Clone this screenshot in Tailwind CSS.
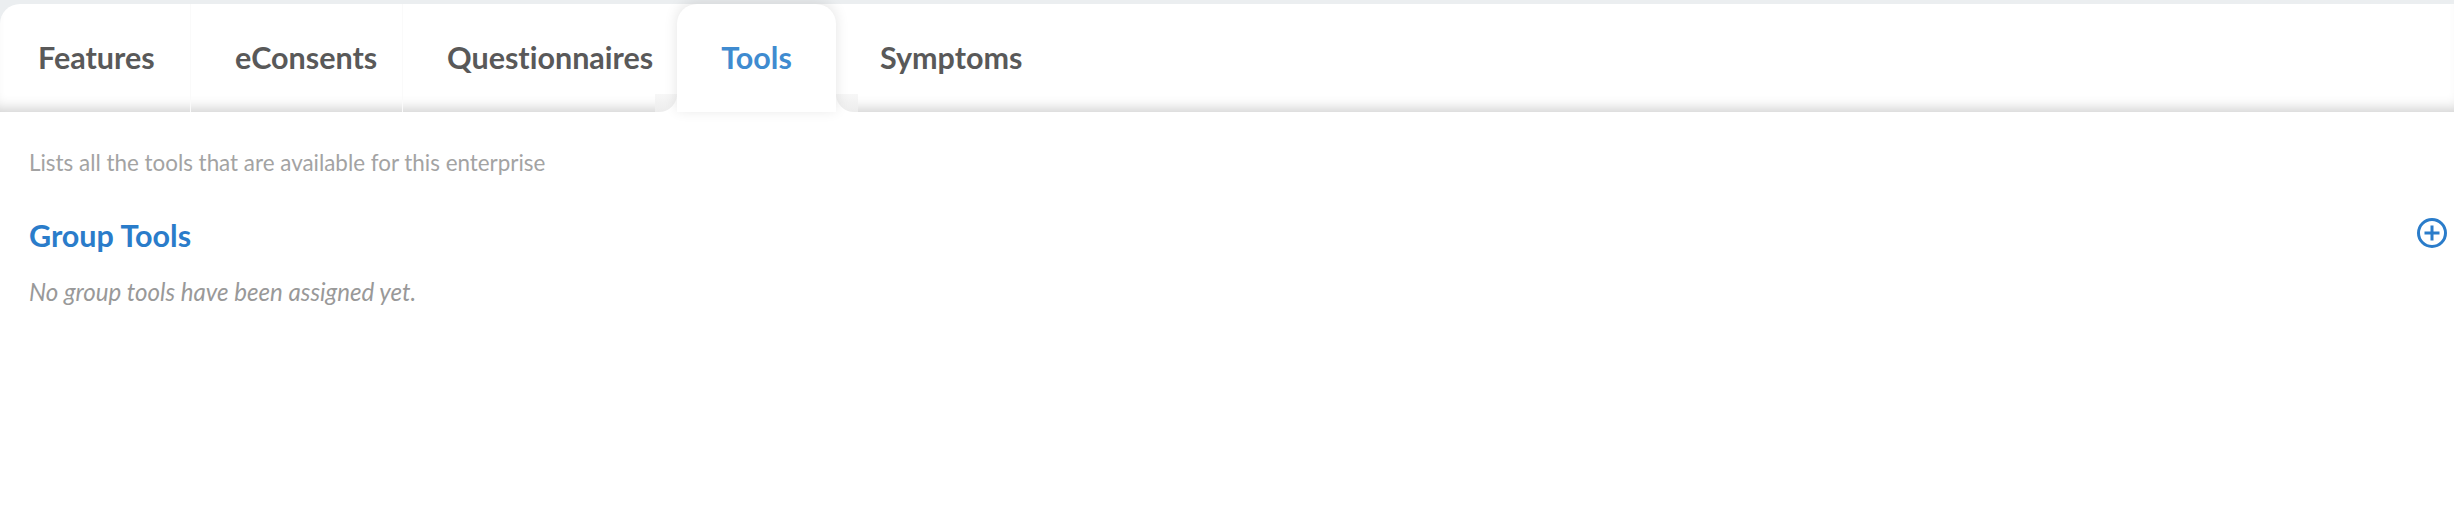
<!doctype html>
<html>
<head>
<meta charset="utf-8">
<script src="https://cdn.jsdelivr.net/npm/@tailwindcss/browser@4"></script>
</head>
<body class="bg-white font-['Lato','Noto_Sans',sans-serif] [font-variant-ligatures:none]">
<div class="w-[2454px] h-[530px] overflow-hidden bg-white">
  <div class="bg-[#ebeef0] pt-[4px]">
    <div class="flex h-[108px] bg-white rounded-tl-[20px] shadow-[inset_0_-12px_14px_-9px_rgba(0,0,0,0.2)]">
      <div class="w-[191px] flex items-center pl-[38px] border-r border-[#fafafa] text-[30.5px] font-bold text-[#595959]">Features</div>
      <div class="w-[212px] flex items-center pl-[44px] border-r border-[#fafafa] text-[30.5px] font-bold text-[#595959]">eConsents</div>
      <div class="relative w-[274px] flex items-center pl-[44px] text-[30.5px] font-bold text-[#595959]">Questionnaires
        <span class="absolute right-0 bottom-0 w-[22px] h-[18px] bg-white"><span class="block w-full h-full bg-gradient-to-b from-[#f7f7f7] to-[#ececec] rounded-br-[20px]"></span></span>
      </div>
      <div class="relative z-10 w-[159px] flex items-center justify-center h-[108px] bg-white rounded-t-[20px] shadow-[0_-2px_14px_rgba(0,0,0,0.11)] text-[30.5px] font-bold text-[#3f8bd0]">Tools</div>
      <div class="relative flex items-center pl-[44px] text-[30.5px] font-bold text-[#595959]">Symptoms
        <span class="absolute left-0 bottom-0 w-[22px] h-[18px] bg-white"><span class="block w-full h-full bg-gradient-to-b from-[#f7f7f7] to-[#ececec] rounded-bl-[20px]"></span></span>
      </div>
    </div>
  </div>
  <div class="relative z-20 px-[29px]">
    <p class="pt-[36px] text-[22.4px] leading-[30px] text-[#a3a3a3]">Lists all the tools that are available for this enterprise</p>
    <div class="flex items-center justify-between mt-[37px] mr-[-23px]">
      <h2 class="text-[30.5px] leading-[40px] font-bold text-[#2a7cca]">Group Tools</h2>
      <svg class="w-[32px] h-[32px] mt-[-4px] text-[#2a7cca]" viewBox="0 0 32 32" fill="none" stroke="currentColor" stroke-width="3"><circle cx="16" cy="16" r="13.5"/><path d="M16 8.5v15M8.5 16h15"/></svg>
    </div>
    <p class="mt-[22px] text-[24.1px] leading-[30px] italic text-[#999999]">No group tools have been assigned yet.</p>
  </div>
</div>
</body>
</html>
